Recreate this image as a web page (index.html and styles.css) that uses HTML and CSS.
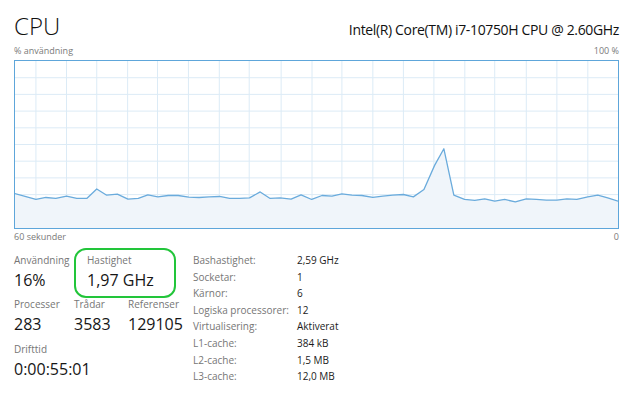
FILE: index.html
```html
<!DOCTYPE html>
<html lang="sv">
<head>
<meta charset="utf-8">
<title>CPU</title>
<link rel="stylesheet" href="styles.css">
</head>
<body>
<div class="page">
  <header class="head">
    <h1 class="title">CPU</h1>
    <div class="model">Intel(R) Core(TM) i7-10750H CPU @ 2.60GHz</div>
  </header>
  <div class="axis axis-top"><span>% användning</span><span>100 %</span></div>
  <div class="graph">
    <svg class="chart" viewBox="0 0 605 168" preserveAspectRatio="none">
      <g class="grid">
        <line x1="21" y1="0" x2="21" y2="168"/>
        <line x1="51.7" y1="0" x2="51.7" y2="168"/>
        <line x1="82" y1="0" x2="82" y2="168"/>
        <line x1="113" y1="0" x2="113" y2="168"/>
        <line x1="143" y1="0" x2="143" y2="168"/>
        <line x1="174" y1="0" x2="174" y2="168"/>
        <line x1="205" y1="0" x2="205" y2="168"/>
        <line x1="235" y1="0" x2="235" y2="168"/>
        <line x1="267" y1="0" x2="267" y2="168"/>
        <line x1="298" y1="0" x2="298" y2="168"/>
        <line x1="328" y1="0" x2="328" y2="168"/>
        <line x1="359" y1="0" x2="359" y2="168"/>
        <line x1="389.7" y1="0" x2="389.7" y2="168"/>
        <line x1="420.3" y1="0" x2="420.3" y2="168"/>
        <line x1="451.3" y1="0" x2="451.3" y2="168"/>
        <line x1="481.3" y1="0" x2="481.3" y2="168"/>
        <line x1="513" y1="0" x2="513" y2="168"/>
        <line x1="543.7" y1="0" x2="543.7" y2="168"/>
        <line x1="574.7" y1="0" x2="574.7" y2="168"/>
        <line x1="0" y1="16.8" x2="605" y2="16.8"/>
        <line x1="0" y1="33.6" x2="605" y2="33.6"/>
        <line x1="0" y1="50.4" x2="605" y2="50.4"/>
        <line x1="0" y1="67.2" x2="605" y2="67.2"/>
        <line x1="0" y1="84" x2="605" y2="84"/>
        <line x1="0" y1="100.8" x2="605" y2="100.8"/>
        <line x1="0" y1="117.6" x2="605" y2="117.6"/>
        <line x1="0" y1="134.4" x2="605" y2="134.4"/>
        <line x1="0" y1="151.2" x2="605" y2="151.2"/>
      </g>
      <polygon class="area" points="0,168 0,133.3 21,139.3 31,137.3 41,138.3 51.7,136 62,138.3 72,138.3 82,128.7 92,135 102.7,134 113.3,139 123.7,138.3 133.3,134.7 143.3,136.7 153.7,135.3 163.7,135.3 174.3,137 184.7,137.3 194.7,136.7 205.3,136.3 215.3,138.3 225.3,138.3 235.3,137.7 246,131.7 256,138.3 266,137.7 277,139 287,134.7 297.7,139.3 308,135.3 318,136 328,133.7 338,135 348,135.3 359,137.3 369,136 379,135 389.7,134.3 399.7,136.7 410.3,129.3 421,105 430.3,88.3 440.3,135 451,139.3 461.3,140.3 471.3,138.7 481.3,141 491.3,139.3 502,141.7 513,138.7 523,139.3 533,140 543.7,140 553.7,138.7 563.7,139.3 574.7,136.7 584.7,135 594.7,137.7 605,141 605,168"/>
      <polyline class="line" points="0,133.3 21,139.3 31,137.3 41,138.3 51.7,136 62,138.3 72,138.3 82,128.7 92,135 102.7,134 113.3,139 123.7,138.3 133.3,134.7 143.3,136.7 153.7,135.3 163.7,135.3 174.3,137 184.7,137.3 194.7,136.7 205.3,136.3 215.3,138.3 225.3,138.3 235.3,137.7 246,131.7 256,138.3 266,137.7 277,139 287,134.7 297.7,139.3 308,135.3 318,136 328,133.7 338,135 348,135.3 359,137.3 369,136 379,135 389.7,134.3 399.7,136.7 410.3,129.3 421,105 430.3,88.3 440.3,135 451,139.3 461.3,140.3 471.3,138.7 481.3,141 491.3,139.3 502,141.7 513,138.7 523,139.3 533,140 543.7,140 553.7,138.7 563.7,139.3 574.7,136.7 584.7,135 594.7,137.7 605,141"/>
    </svg>
  </div>
  <div class="axis axis-bottom"><span>60 sekunder</span><span>0</span></div>
  <section class="details">
    <div class="live">
      <div class="stat-row">
        <div class="stat w-use"><div class="label">Användning</div><div class="value">16%</div></div>
        <div class="stat speed"><div class="label">Hastighet</div><div class="value">1,97 GHz</div></div>
      </div>
      <div class="stat-row">
        <div class="stat w-proc"><div class="label">Processer</div><div class="value">283</div></div>
        <div class="stat w-thr"><div class="label">Trådar</div><div class="value">3583</div></div>
        <div class="stat"><div class="label">Referenser</div><div class="value">129105</div></div>
      </div>
      <div class="stat-row">
        <div class="stat"><div class="label">Drifttid</div><div class="value">0:00:55:01</div></div>
      </div>
    </div>
    <dl class="specs">
      <dt>Bashastighet:</dt><dd>2,59 GHz</dd>
      <dt>Socketar:</dt><dd>1</dd>
      <dt>Kärnor:</dt><dd>6</dd>
      <dt>Logiska processorer:</dt><dd>12</dd>
      <dt>Virtualisering:</dt><dd>Aktiverat</dd>
      <dt>L1-cache:</dt><dd>384 kB</dd>
      <dt>L2-cache:</dt><dd>1,5 MB</dd>
      <dt>L3-cache:</dt><dd>12,0 MB</dd>
    </dl>
  </section>
</div>
</body>
</html>
```

FILE: styles.css
```css
* { box-sizing: border-box; }
html, body { margin: 0; padding: 0; background: #ffffff; }
body {
  font-family: "Open Sans", "Noto Sans", sans-serif;
  color: #1b1b1b;
}
.page {
  width: 632px;
  height: 407px;
  padding: 10px 13px 0 14px;
  overflow: hidden;
}
.head {
  display: flex;
  justify-content: space-between;
  align-items: baseline;
  height: 32px;
}
.title {
  margin: 0;
  font-size: 24px;
  font-weight: 300;
  line-height: 32px;
  color: #111;
}
.model {
  font-size: 14px;
  letter-spacing: -0.35px;
  line-height: 32px;
  color: #111;
}
.axis {
  display: flex;
  justify-content: space-between;
  font-size: 9px;
  line-height: 14px;
  color: #7a7a7a;
}
.axis-top { padding-top: 2px; height: 18px; }
.axis-bottom { padding-top: 1px; }
.graph {
  height: 169px;
  border: 1px solid #5ea6da;
  background: #fff;
}
.chart { display: block; width: 100%; height: 100%; }
.grid line { stroke: #dcebf6; stroke-width: 1; }
.area { fill: #f0f5fa; stroke: none; }
.line { fill: none; stroke: #6aabdc; stroke-width: 1.3; stroke-linejoin: round; }
.details {
  display: flex;
  margin-top: 8px;
}
.live {
  width: 179px;
  display: flex;
  flex-direction: column;
  gap: 5px;
}
.stat-row { display: flex; }
.stat-row:last-child { margin-top: 1px; }
.stat { position: relative; }
.w-use { width: 73px; }
.w-proc { width: 60px; }
.w-thr { width: 54px; }
.label {
  font-size: 10px;
  line-height: 16px;
  color: #767676;
}
.value {
  margin-top: 1px;
  font-size: 16px;
  line-height: 22px;
  color: #161616;
}
.speed::after {
  content: "";
  position: absolute;
  top: -4px;
  left: -13px;
  width: 98px;
  height: 46px;
  border: 2.5px solid #22c53a;
  border-radius: 12px;
}
.specs {
  margin: 0;
  display: grid;
  grid-template-columns: 104px auto;
  grid-auto-rows: 16.6px;
  font-size: 10px;
  line-height: 16.6px;
}
.specs dt { color: #767676; }
.specs dd { margin: 0; color: #1b1b1b; }
```
